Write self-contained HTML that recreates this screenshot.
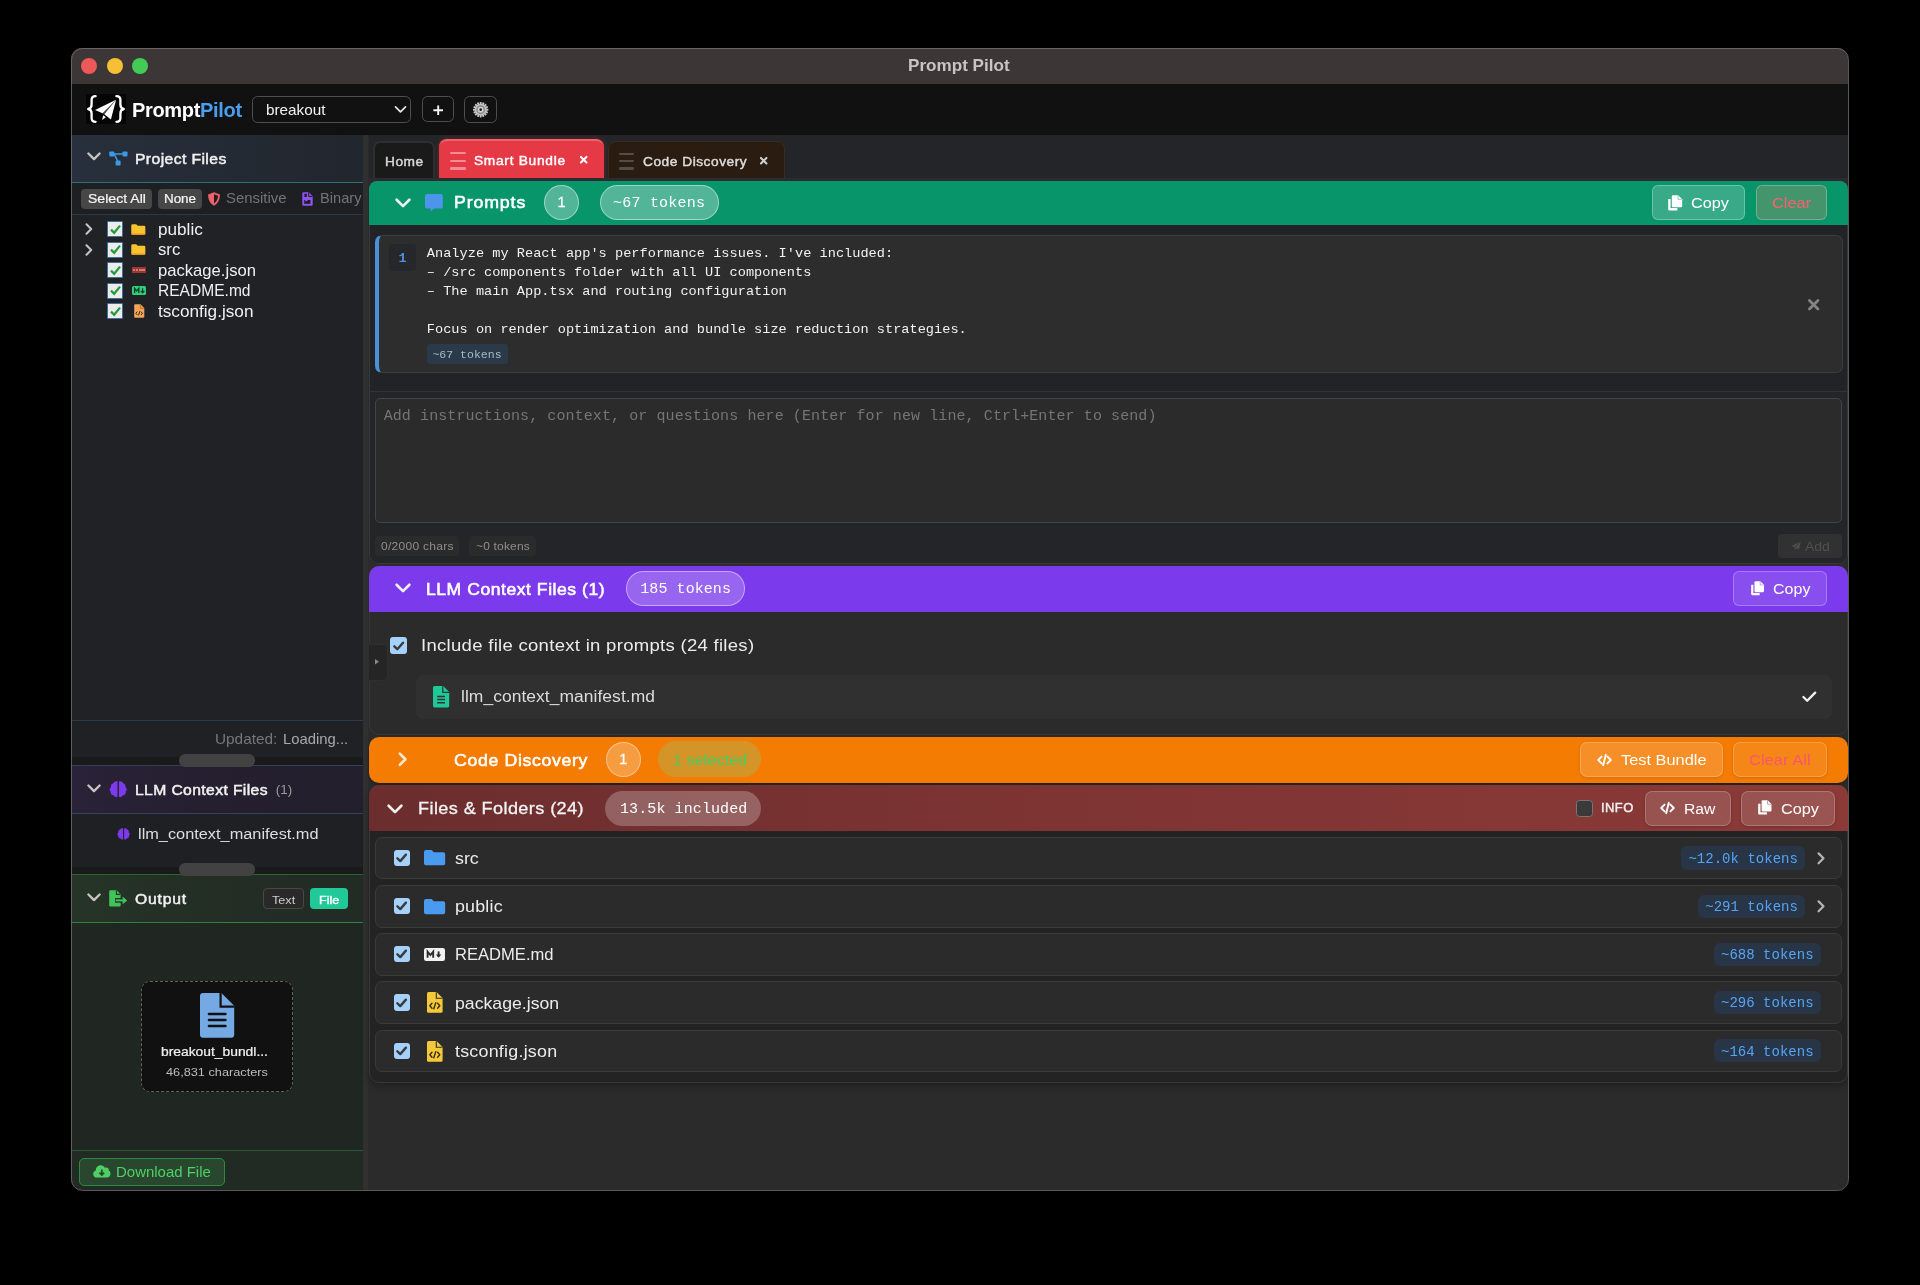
<!DOCTYPE html>
<html lang="en">
<head>
<meta charset="utf-8">
<title>Prompt Pilot</title>
<style>
*{box-sizing:border-box;margin:0;padding:0}
html,body{width:1920px;height:1285px;background:#000;overflow:hidden}
body{font-family:"Liberation Sans",sans-serif;color:#eee;position:relative}
.abs{position:absolute}
.t{position:absolute;white-space:nowrap;line-height:1}
svg{position:absolute;display:block;overflow:visible}
#win{position:absolute;left:71.4px;top:48px;width:1776.8px;height:1142px;border-radius:11px;overflow:hidden;background:#2b2b2b}
#L{position:absolute;left:-71.4px;top:-48px;width:1920px;height:1285px;will-change:transform}
#winborder{position:absolute;left:70.9px;top:47.5px;width:1777.8px;height:1143px;border-radius:11.5px;border:1px solid rgba(120,116,116,.75);pointer-events:none;z-index:50}
</style>
</head>
<body>
<div id="win"><div id="L">
<div class="abs" style="left:71px;top:48px;width:1778px;height:36px;background:#3c3636;"></div>
<div class="abs" style="left:80.8px;top:57.9px;width:16px;height:16px;background:#ee5858;border-radius:50%;"></div>
<div class="abs" style="left:106.6px;top:57.9px;width:16px;height:16px;background:#f6bf35;border-radius:50%;"></div>
<div class="abs" style="left:131.8px;top:57.9px;width:16px;height:16px;background:#44cb56;border-radius:50%;"></div>
<div class="t" style="left:908.00px;top:57.13px;font-size:16.5px;color:#c9c4c4;font-weight:bold;transform:scaleX(1.0359);transform-origin:0 0;">Prompt Pilot</div>
<div class="abs" style="left:71px;top:84px;width:1778px;height:51px;background:#111111;"></div>
<div class="abs" style="left:86px;top:94px;width:40px;height:30px;background:#050505;"></div>
<svg style="left:86px;top:94px" width="40" height="30" viewBox="0 0 40 30" fill="none" stroke="#fff" stroke-width="2.3" stroke-linecap="round" stroke-linejoin="round">
<path d="M9.6 2.2 C6.4 2.2 5.6 3.4 5.6 6 V10.6 C5.6 13.2 4.6 14.6 2.2 15 C4.6 15.4 5.6 16.8 5.6 19.4 V24 C5.6 26.6 6.4 27.8 9.6 27.8"/>
<path d="M30.4 2.2 C33.6 2.2 34.4 3.4 34.4 6 V10.6 C34.4 13.2 35.4 14.6 37.8 15 C35.4 15.4 34.4 16.8 34.4 19.4 V24 C34.4 26.6 33.6 27.8 30.4 27.8"/>
<path d="M30.1 5.7 L9 16 L16.6 19.2 Z" fill="#fff" stroke="none"/>
<path d="M30.1 5.7 L18.3 20.3 L24.9 25.4 Z" fill="#fff" stroke="none"/>
<path d="M17.3 21.2 L16 26 L19.9 23.2 Z" fill="#fff" stroke="none"/>
<path d="M30.1 5.7 L16.6 19.2 L18.3 20.3 Z" fill="#fff" stroke="none" opacity=".25"/>
</svg>
<div class="t" style="left:132px;top:99.97px;font-size:20px;font-weight:bold;letter-spacing:-0.33px;color:#fff">Prompt<span style="color:#4a9eed">Pilot</span></div>
<div class="abs" style="left:252px;top:96.2px;width:159.2px;height:26.8px;background:#111;border:1px solid #4e4e4e;border-radius:5.5px;"></div>
<div class="t" style="left:265.50px;top:102.10px;font-size:15px;color:#f2f2f2;transform:scaleX(1.0193);transform-origin:0 0;">breakout</div>
<svg style="left:394px;top:105px" width="13" height="9" viewBox="0 0 13 9" fill="none" stroke="#e6e6e6" stroke-width="1.7" stroke-linecap="round" stroke-linejoin="round"><path d="M1.5 1.8 L6.5 6.8 L11.5 1.8"/></svg>
<div class="abs" style="left:421.8px;top:96.2px;width:32px;height:25.8px;background:#111;border:1px solid #4e4e4e;border-radius:5.5px;"></div>
<svg style="left:432.6px;top:104.5px" width="10.4" height="10.4" viewBox="0 0 10.4 10.4" stroke="#f4f4f4" stroke-width="1.9" fill="none"><path d="M5.2 0.4 V10 M0.4 5.2 H10"/></svg>
<div class="abs" style="left:464px;top:96px;width:33px;height:27px;background:#111;border:1px solid #4e4e4e;border-radius:5.5px;"></div>
<svg style="left:473px;top:101.6px" width="15.4" height="15.4" viewBox="-7.7 -7.7 15.4 15.4" ><g fill="#c4c4c4"><rect x="-0.95" y="-7.7" width="1.9" height="2.6" rx=".3" transform="rotate(0.0)"/><rect x="-0.95" y="-7.7" width="1.9" height="2.6" rx=".3" transform="rotate(22.5)"/><rect x="-0.95" y="-7.7" width="1.9" height="2.6" rx=".3" transform="rotate(45.0)"/><rect x="-0.95" y="-7.7" width="1.9" height="2.6" rx=".3" transform="rotate(67.5)"/><rect x="-0.95" y="-7.7" width="1.9" height="2.6" rx=".3" transform="rotate(90.0)"/><rect x="-0.95" y="-7.7" width="1.9" height="2.6" rx=".3" transform="rotate(112.5)"/><rect x="-0.95" y="-7.7" width="1.9" height="2.6" rx=".3" transform="rotate(135.0)"/><rect x="-0.95" y="-7.7" width="1.9" height="2.6" rx=".3" transform="rotate(157.5)"/><rect x="-0.95" y="-7.7" width="1.9" height="2.6" rx=".3" transform="rotate(180.0)"/><rect x="-0.95" y="-7.7" width="1.9" height="2.6" rx=".3" transform="rotate(202.5)"/><rect x="-0.95" y="-7.7" width="1.9" height="2.6" rx=".3" transform="rotate(225.0)"/><rect x="-0.95" y="-7.7" width="1.9" height="2.6" rx=".3" transform="rotate(247.5)"/><rect x="-0.95" y="-7.7" width="1.9" height="2.6" rx=".3" transform="rotate(270.0)"/><rect x="-0.95" y="-7.7" width="1.9" height="2.6" rx=".3" transform="rotate(292.5)"/><rect x="-0.95" y="-7.7" width="1.9" height="2.6" rx=".3" transform="rotate(315.0)"/><rect x="-0.95" y="-7.7" width="1.9" height="2.6" rx=".3" transform="rotate(337.5)"/><circle r="5.9"/></g><circle r="3.7" fill="none" stroke="#8a8a8a" stroke-width="1.5"/><circle r="2.5" fill="#d8d8d8"/><circle r="1.35" fill="#1a1a1a"/></svg>
<div class="abs" style="left:71px;top:135px;width:292px;height:1055px;background:#202226;"></div>
<div class="abs" style="left:71px;top:135px;width:292px;height:48px;background:linear-gradient(90deg,#27303c 0%,#242a34 55%,#22262d 100%);border-bottom:1px solid #2b6f78;"></div>
<svg style="left:87px;top:152.3px" width="14" height="9.0" viewBox="0 0 14 9" fill="none" stroke="#c4c4c4" stroke-width="2.35" stroke-linecap="round" stroke-linejoin="round"><path d="M1.4 1.5 L7 7.1 L12.6 1.5"/></svg>
<svg style="left:108.5px;top:150.5px" width="19" height="15" viewBox="0 0 19 15" ><g fill="#3b9ae8"><rect x="0.3" y="0.4" width="5" height="5" rx=".8"/><rect x="13.5" y="0.4" width="5" height="5" rx=".8"/><rect x="6.6" y="9.6" width="5" height="5" rx=".8"/></g><path d="M5 2.9 H13.8 M5.2 3.2 L8.6 10" stroke="#3b9ae8" stroke-width="1.5" fill="none"/></svg>
<div class="t" style="left:135.30px;top:152.41px;font-size:14.4px;color:#f0f0f0;letter-spacing:0.377px;transform:scaleX(1.0900);transform-origin:0 0;-webkit-text-stroke:0.49px #f0f0f0;">Project Files</div>
<div class="abs" style="left:71px;top:183px;width:292px;height:32px;background:#1d1f23;border-bottom:1px solid #2a3948;"></div>
<div class="abs" style="left:81px;top:189px;width:71px;height:19.5px;background:#474747;border-radius:4px;"></div>
<div class="t" style="left:88.00px;top:193.16px;font-size:12.8px;color:#f4f4f4;letter-spacing:0.056px;transform:scaleX(1.0900);transform-origin:0 0;-webkit-text-stroke:0.23px #f4f4f4;">Select All</div>
<div class="abs" style="left:157.5px;top:189px;width:44.5px;height:19.5px;background:#474747;border-radius:4px;"></div>
<div class="t" style="left:163.80px;top:193.16px;font-size:12.8px;color:#f4f4f4;transform:scaleX(1.0457);transform-origin:0 0;-webkit-text-stroke:0.23px #f4f4f4;">None</div>
<svg style="left:207px;top:192px" width="14" height="14" viewBox="0 0 14 14" ><path d="M7 0.3 L12.9 2.5 C12.9 7.6 11 11.4 7 13.7 C3 11.4 1.1 7.6 1.1 2.5 Z" fill="#f0616b"/><path d="M7 2.3 V11.5 C9.6 9.8 10.9 7.2 11 3.8 Z" fill="#1d1f23"/></svg>
<div class="t" style="left:225.50px;top:190.88px;font-size:14.2px;color:#747474;transform:scaleX(1.0500);transform-origin:0 0;">Sensitive</div>
<svg style="left:302px;top:191.5px" width="11" height="14" viewBox="0 0 11 14" ><path d="M1.4 0.3 H6.8 L10.7 4.2 V12.5 Q10.7 13.7 9.5 13.7 H1.4 Q0.3 13.7 0.3 12.5 V1.5 Q0.3 0.3 1.4 0.3 Z" fill="#9152f0"/><path d="M6.6 0.6 V4.4 H10.4" fill="none" stroke="#1d1f23" stroke-width="1"/><rect x="2.4" y="1.8" width="2.4" height="3.2" fill="#1d1f23"/><rect x="2.2" y="8" width="6.2" height="3.8" fill="#1d1f23"/><rect x="3.2" y="6.2" width="2.2" height="3" fill="#9152f0"/></svg>
<div class="t" style="left:320.00px;top:190.88px;font-size:14.2px;color:#747474;transform:scaleX(1.0310);transform-origin:0 0;">Binary</div>
<svg style="left:85px;top:223px" width="8.0" height="12" viewBox="0 0 8 12" fill="none" stroke="#c2c2c2" stroke-width="2.1" stroke-linecap="round" stroke-linejoin="round"><path d="M1.5 1.3 L6.2 6 L1.5 10.7"/></svg>
<svg style="left:85px;top:243.5px" width="8.0" height="12" viewBox="0 0 8 12" fill="none" stroke="#c2c2c2" stroke-width="2.1" stroke-linecap="round" stroke-linejoin="round"><path d="M1.5 1.3 L6.2 6 L1.5 10.7"/></svg>
<div class="abs" style="left:107px;top:221px;width:16px;height:16px;background:#ececec;border:1.5px solid #3f6f9f;border-radius:1px;"></div>
<svg style="left:109.5px;top:223.5px" width="11" height="11" viewBox="0 0 11 11" fill="none" stroke="#1f9d3a" stroke-width="2.2"><path d="M1 5.6 L4.2 8.8 L10 1.6"/></svg>
<div class="t" style="left:157.50px;top:220.99px;font-size:16.2px;color:#f0f0f0;transform:scaleX(1.0584);transform-origin:0 0;">public</div>
<div class="abs" style="left:107px;top:241.5px;width:16px;height:16px;background:#ececec;border:1.5px solid #3f6f9f;border-radius:1px;"></div>
<svg style="left:109.5px;top:244.0px" width="11" height="11" viewBox="0 0 11 11" fill="none" stroke="#1f9d3a" stroke-width="2.2"><path d="M1 5.6 L4.2 8.8 L10 1.6"/></svg>
<div class="t" style="left:157.50px;top:241.49px;font-size:16.2px;color:#f0f0f0;transform:scaleX(1.0326);transform-origin:0 0;">src</div>
<div class="abs" style="left:107px;top:262px;width:16px;height:16px;background:#ececec;border:1.5px solid #3f6f9f;border-radius:1px;"></div>
<svg style="left:109.5px;top:264.5px" width="11" height="11" viewBox="0 0 11 11" fill="none" stroke="#1f9d3a" stroke-width="2.2"><path d="M1 5.6 L4.2 8.8 L10 1.6"/></svg>
<div class="t" style="left:157.50px;top:261.99px;font-size:16.2px;color:#f0f0f0;transform:scaleX(1.0265);transform-origin:0 0;">package.json</div>
<div class="abs" style="left:107px;top:282.5px;width:16px;height:16px;background:#ececec;border:1.5px solid #3f6f9f;border-radius:1px;"></div>
<svg style="left:109.5px;top:285.0px" width="11" height="11" viewBox="0 0 11 11" fill="none" stroke="#1f9d3a" stroke-width="2.2"><path d="M1 5.6 L4.2 8.8 L10 1.6"/></svg>
<div class="t" style="left:157.50px;top:282.49px;font-size:16.2px;color:#f0f0f0;transform:scaleX(0.9614);transform-origin:0 0;">README.md</div>
<div class="abs" style="left:107px;top:303px;width:16px;height:16px;background:#ececec;border:1.5px solid #3f6f9f;border-radius:1px;"></div>
<svg style="left:109.5px;top:305.5px" width="11" height="11" viewBox="0 0 11 11" fill="none" stroke="#1f9d3a" stroke-width="2.2"><path d="M1 5.6 L4.2 8.8 L10 1.6"/></svg>
<div class="t" style="left:157.50px;top:302.99px;font-size:16.2px;color:#f0f0f0;transform:scaleX(1.0605);transform-origin:0 0;">tsconfig.json</div>
<svg style="left:130.9px;top:223.7px" width="14.72" height="11.040000000000001" viewBox="0 0 16 12" ><path d="M1.6 0.4 H5.6 L7.4 2 H14.2 Q15.6 2 15.6 3.4 V10.4 Q15.6 11.8 14.2 11.8 H1.6 Q0.3 11.8 0.3 10.4 V1.8 Q0.3 0.4 1.6 0.4 Z" fill="#f7c32e"/><path d="M0.3 10 H15.6 V10.4 Q15.6 11.8 14.2 11.8 H1.6 Q0.3 11.8 0.3 10.4 Z" fill="#f09a1a" opacity=".75"/></svg>
<svg style="left:130.9px;top:244.2px" width="14.72" height="11.040000000000001" viewBox="0 0 16 12" ><path d="M1.6 0.4 H5.6 L7.4 2 H14.2 Q15.6 2 15.6 3.4 V10.4 Q15.6 11.8 14.2 11.8 H1.6 Q0.3 11.8 0.3 10.4 V1.8 Q0.3 0.4 1.6 0.4 Z" fill="#f7c32e"/><path d="M0.3 10 H15.6 V10.4 Q15.6 11.8 14.2 11.8 H1.6 Q0.3 11.8 0.3 10.4 Z" fill="#f09a1a" opacity=".75"/></svg>
<div class="abs" style="left:131.7px;top:267.4px;width:14.5px;height:5.6px;background:#9e3533;"></div>
<div class="abs" style="left:133.2px;top:268.8px;width:11.4px;height:2px;background:linear-gradient(90deg,#d98c88 0 2px,transparent 2px 3px,#d98c88 3px 5.2px,transparent 5.2px 6.2px,#d98c88 6.2px 11.4px);opacity:.8;"></div>
<div class="abs" style="left:131.7px;top:286px;width:14.3px;height:9.2px;background:#2fcf7a;border-radius:1.5px;"></div>
<svg style="left:131.7px;top:286px" width="14.3" height="9.2" viewBox="0 0 14.3 9.2" fill="none" stroke="#143d27" stroke-width="1.3"><path d="M2.6 7 V2.4 L4.7 5 L6.8 2.4 V7"/><path d="M10.6 2.2 V6.6 M8.8 4.8 L10.6 6.8 L12.4 4.8" stroke-width="1.2"/></svg>
<svg style="left:133.7px;top:303.5px" width="10.5" height="14" viewBox="0 0 10.5 14" ><path d="M1.2 0.2 H6.4 L10.3 4.1 V12.6 Q10.3 13.8 9.1 13.8 H1.2 Q0.2 13.8 0.2 12.6 V1.4 Q0.2 0.2 1.2 0.2 Z" fill="#f3a45b"/><path d="M6.3 0.5 V4.2 H10" fill="none" stroke="#b36a2a" stroke-width=".9"/><path d="M3.3 7.6 L1.9 9.3 L3.3 11 M7 7.6 L8.4 9.3 L7 11 M5.8 7.2 L4.6 11.4" fill="none" stroke="#3a2410" stroke-width="1"/></svg>
<div class="abs" style="left:71px;top:720px;width:292px;height:37px;background:#1f2125;border-top:1px solid #2d3b4e;"></div>
<div class="t" style="left:215.00px;top:731.68px;font-size:14.2px;color:#777;transform:scaleX(1.0810);transform-origin:0 0;">Updated:</div>
<div class="t" style="left:283.00px;top:731.68px;font-size:14.2px;color:#a8a8a8;transform:scaleX(1.0469);transform-origin:0 0;">Loading...</div>
<div class="abs" style="left:71px;top:757px;width:292px;height:7.5px;background:#1a1a1b;"></div>
<div class="abs" style="left:71px;top:764.5px;width:292px;height:49px;background:linear-gradient(90deg,#2a2238 0%,#251f30 45%,#231f2c 100%);border-top:1px solid #34405a;border-bottom:1px solid #35435f;"></div>
<div class="abs" style="left:179px;top:754.3px;width:76px;height:12.6px;background:#424242;border-radius:6.3px;"></div>
<svg style="left:87px;top:783.5px" width="14" height="9.0" viewBox="0 0 14 9" fill="none" stroke="#c4c4c4" stroke-width="2.35" stroke-linecap="round" stroke-linejoin="round"><path d="M1.4 1.5 L7 7.1 L12.6 1.5"/></svg>
<svg style="left:109px;top:780.8px" width="18.4" height="16.56" viewBox="0 0 20 18" ><path d="M9.2 0.6 C7.4 -0.2 5.4 0.6 4.8 2.4 C2.8 2.6 1.6 4.6 2.2 6.4 C0.4 7.6 0.2 10.4 1.8 11.8 C1.4 14 3 15.8 5 15.6 C5.8 17.4 8 18 9.2 17.2 Z" fill="#7c3aed"/><path d="M10.8 0.6 C12.6 -0.2 14.6 0.6 15.2 2.4 C17.2 2.6 18.4 4.6 17.8 6.4 C19.6 7.6 19.8 10.4 18.2 11.8 C18.6 14 17 15.8 15 15.6 C14.2 17.4 12 18 10.8 17.2 Z" fill="#7c3aed"/></svg>
<div class="t" style="left:135.30px;top:782.81px;font-size:14.4px;color:#f0f0f0;letter-spacing:0.351px;transform:scaleX(1.0900);transform-origin:0 0;-webkit-text-stroke:0.49px #f0f0f0;">LLM Context Files</div>
<div class="t" style="left:275.80px;top:782.66px;font-size:13.4px;color:#9a9a9a;">(1)</div>
<div class="abs" style="left:71px;top:814px;width:292px;height:53px;background:#1f2024;"></div>
<svg style="left:117px;top:827.5px" width="13.2" height="11.88" viewBox="0 0 20 18" ><path d="M9.2 0.6 C7.4 -0.2 5.4 0.6 4.8 2.4 C2.8 2.6 1.6 4.6 2.2 6.4 C0.4 7.6 0.2 10.4 1.8 11.8 C1.4 14 3 15.8 5 15.6 C5.8 17.4 8 18 9.2 17.2 Z" fill="#7c3aed"/><path d="M10.8 0.6 C12.6 -0.2 14.6 0.6 15.2 2.4 C17.2 2.6 18.4 4.6 17.8 6.4 C19.6 7.6 19.8 10.4 18.2 11.8 C18.6 14 17 15.8 15 15.6 C14.2 17.4 12 18 10.8 17.2 Z" fill="#7c3aed"/></svg>
<div class="t" style="left:138.30px;top:825.83px;font-size:15.2px;color:#dedede;transform:scaleX(1.0748);transform-origin:0 0;">llm_context_manifest.md</div>
<div class="abs" style="left:71px;top:866.5px;width:292px;height:7.5px;background:#1a1a1b;"></div>
<div class="abs" style="left:71px;top:874px;width:292px;height:49px;background:linear-gradient(90deg,#263427 0%,#232e25 45%,#222b24 100%);border-top:1px solid #296531;border-bottom:1px solid #2d823d;"></div>
<div class="abs" style="left:179px;top:863.2px;width:76px;height:12.6px;background:#424242;border-radius:6.3px;"></div>
<svg style="left:87px;top:893px" width="14" height="9.0" viewBox="0 0 14 9" fill="none" stroke="#c4c4c4" stroke-width="2.35" stroke-linecap="round" stroke-linejoin="round"><path d="M1.4 1.5 L7 7.1 L12.6 1.5"/></svg>
<svg style="left:108.8px;top:890px" width="19" height="17" viewBox="0 0 19 17" ><path d="M1.6 0.2 H7.6 L11.6 4.2 V15.2 Q11.6 16.6 10.2 16.6 H1.6 Q0.2 16.6 0.2 15.2 V1.6 Q0.2 0.2 1.6 0.2 Z" fill="#3fc35a"/><path d="M7.4 0.4 V4.4 H11.4" fill="none" stroke="#232e25" stroke-width="1.1"/><path d="M6 10.4 H13.4" stroke="#232e25" stroke-width="4.6"/><path d="M6.6 10.4 H14 " stroke="#3fc35a" stroke-width="2"/><path d="M13.6 6.6 L18.2 10.4 L13.6 14.2 Z" fill="#3fc35a"/></svg>
<div class="t" style="left:135.30px;top:891.51px;font-size:14.4px;color:#f0f0f0;letter-spacing:0.746px;transform:scaleX(1.0900);transform-origin:0 0;-webkit-text-stroke:0.49px #f0f0f0;">Output</div>
<div class="abs" style="left:262.5px;top:888px;width:41px;height:21px;background:#29292a;border:1px solid #474747;border-radius:4px;"></div>
<div class="t" style="left:271.80px;top:893.68px;font-size:11.6px;color:#cfcfcf;transform:scaleX(1.0900);transform-origin:0 0;">Text</div>
<div class="abs" style="left:309.5px;top:888px;width:38.5px;height:21px;background:#20c997;border-radius:4px;"></div>
<div class="t" style="left:318.80px;top:893.60px;font-size:11.7px;color:#fff;transform:scaleX(1.0714);transform-origin:0 0;-webkit-text-stroke:0.40px #fff;">File</div>
<div class="abs" style="left:71px;top:923px;width:292px;height:228px;background:#202622;"></div>
<div class="abs" style="left:140.9px;top:981.3px;width:152.3px;height:111px;background:#111;border:1.4px dashed #626262;border-radius:9px;"></div>
<svg style="left:200px;top:992.8px" width="34.2" height="44.8" viewBox="0 0 34.2 44.8" ><path d="M3 0 H21.4 L34.2 12.8 V41.8 Q34.2 44.8 31.2 44.8 H3 Q0 44.8 0 41.8 V3 Q0 0 3 0 Z" fill="#74a9e4"/><path d="M20.6 0 V13.6 H34.2" fill="none" stroke="#111" stroke-width="2.2"/><path d="M9 21 H25.4 M9 27 H25.4 M9 33 H25.4" stroke="#111" stroke-width="2.6" stroke-linecap="round"/></svg>
<div class="t" style="left:161.30px;top:1045.78px;font-size:12.9px;color:#f0f0f0;transform:scaleX(1.0733);transform-origin:0 0;-webkit-text-stroke:0.23px #f0f0f0;">breakout_bundl...</div>
<div class="t" style="left:166.30px;top:1065.90px;font-size:11.7px;color:#bdbdbd;transform:scaleX(1.0891);transform-origin:0 0;">46,831 characters</div>
<div class="abs" style="left:71px;top:1150px;width:292px;height:40.5px;background:#222a24;border-top:1.3px solid #2a5a32;"></div>
<div class="abs" style="left:79px;top:1157.5px;width:146px;height:28px;background:#29472f;border:1px solid #2c8a3e;border-radius:5px;"></div>
<svg style="left:92.5px;top:1164.8px" width="17.6" height="12.8" viewBox="0 0 17.6 12.8" ><path d="M4.2 12.6 C1.8 12.6 0.2 11 0.2 8.9 C0.2 7.2 1.3 5.8 2.8 5.4 C2.7 2.5 4.8 0.2 7.6 0.2 C9.6 0.2 11.2 1.3 12 2.9 C12.5 2.6 13 2.5 13.5 2.5 C15.1 2.5 16.2 3.9 15.8 5.5 C16.9 6.1 17.5 7.4 17.5 8.7 C17.5 10.9 15.9 12.6 13.8 12.6 Z" fill="#4fcf66"/><path d="M8.8 4.4 V9.6 M6.4 7.6 L8.8 10 L11.2 7.6" fill="none" stroke="#29472f" stroke-width="1.7"/></svg>
<div class="t" style="left:116.20px;top:1164.73px;font-size:14.5px;color:#4fcf66;transform:scaleX(1.0318);transform-origin:0 0;">Download File</div>
<div class="abs" style="left:363.4px;top:135px;width:4.8px;height:1055px;background:#303030;"></div>
<div class="abs" style="left:369px;top:135px;width:1479px;height:46px;background:#242528;"></div>
<div class="abs" style="left:369px;top:181px;width:1479px;height:1009px;background:#2b2b2b;"></div>
<div class="abs" style="left:373.3px;top:141px;width:61.3px;height:40px;background:#1a1a1a;border:2px solid #2f2f30;border-radius:7px 7px 0 0;"></div>
<div class="t" style="left:385.00px;top:155.53px;font-size:12.6px;color:#d8d8d8;letter-spacing:0.450px;transform:scaleX(1.0900);transform-origin:0 0;-webkit-text-stroke:0.43px #d8d8d8;">Home</div>
<div class="abs" style="left:438.5px;top:139.2px;width:165.5px;height:41px;background:#e63946;border-radius:8px 8px 0 0;border-top:2.5px solid #f1626d;box-shadow:0 0 5px rgba(230,57,70,.35);"></div>
<div class="abs" style="left:450px;top:151.8px;width:15.5px;height:2.5px;background:#f58b93;border-radius:1.3px;"></div>
<div class="abs" style="left:450px;top:159.5px;width:15.5px;height:2.5px;background:#f58b93;border-radius:1.3px;"></div>
<div class="abs" style="left:450px;top:167.2px;width:15.5px;height:2.5px;background:#f58b93;border-radius:1.3px;"></div>
<div class="t" style="left:473.80px;top:155.03px;font-size:12.6px;color:#fff;letter-spacing:0.657px;transform:scaleX(1.0900);transform-origin:0 0;-webkit-text-stroke:0.43px #fff;">Smart Bundle</div>
<svg style="left:579.6px;top:156.4px" width="7.4" height="7.4" viewBox="0 0 8 8" stroke="#fff" stroke-width="2.2" stroke-linecap="round" fill="none"><path d="M1 1 L7 7 M7 1 L1 7"/></svg>
<div class="abs" style="left:608.3px;top:141px;width:176.7px;height:40px;background:#2a1c10;border:1.5px solid #3a2c20;border-radius:8px 8px 0 0;"></div>
<div class="abs" style="left:619.3px;top:152.6px;width:15px;height:2.4px;background:#524e49;border-radius:1.2px;"></div>
<div class="abs" style="left:619.3px;top:160px;width:15px;height:2.4px;background:#524e49;border-radius:1.2px;"></div>
<div class="abs" style="left:619.3px;top:167.4px;width:15px;height:2.4px;background:#524e49;border-radius:1.2px;"></div>
<div class="t" style="left:642.60px;top:155.53px;font-size:12.6px;color:#dcdcdc;letter-spacing:0.476px;transform:scaleX(1.0900);transform-origin:0 0;-webkit-text-stroke:0.43px #dcdcdc;">Code Discovery</div>
<svg style="left:760.3px;top:156.6px" width="7.4" height="7.4" viewBox="0 0 8 8" stroke="#d0d0d0" stroke-width="2.2" stroke-linecap="round" fill="none"><path d="M1 1 L7 7 M7 1 L1 7"/></svg>
<div class="abs" style="left:369px;top:177.7px;width:1479px;height:3.7px;background:#2c2c2e;"></div>
<div class="abs" style="left:369.4px;top:181.3px;width:1478.6px;height:382.7px;background:#222327;border:1px solid #38383a;border-radius:8px 8px 10px 10px;"></div>
<div class="abs" style="left:369.4px;top:181.3px;width:1478.6px;height:43.6px;background:#08956a;border-radius:8px 8px 0 0;"></div>
<svg style="left:394.6px;top:197.6px" width="16" height="10.285714285714286" viewBox="0 0 14 9" fill="none" stroke="#f0f0f0" stroke-width="2.3" stroke-linecap="round" stroke-linejoin="round"><path d="M1.4 1.5 L7 7.1 L12.6 1.5"/></svg>
<svg style="left:425.4px;top:193.6px" width="17.8" height="17.8" viewBox="0 0 17.8 17.8" ><path d="M2 0 H15.8 Q17.8 0 17.8 2 V12.4 Q17.8 14.4 15.8 14.4 H9.4 L5.6 17.6 V14.4 H2 Q0 14.4 0 12.4 V2 Q0 0 2 0 Z" fill="#4d94ec"/></svg>
<div class="t" style="left:454.00px;top:194.20px;font-size:16.3px;color:#fff;letter-spacing:0.793px;transform:scaleX(1.0900);transform-origin:0 0;-webkit-text-stroke:0.55px #fff;">Prompts</div>
<div class="abs" style="left:543.8px;top:185px;width:35.2px;height:35.2px;background:rgba(255,255,255,.3);border:1px solid rgba(255,255,255,.45);border-radius:50%;"></div>
<div class="t" style="left:557.40px;top:195.24px;font-size:14.6px;color:#fff;-webkit-text-stroke:0.26px #fff;">1</div>
<div class="abs" style="left:599.6px;top:185px;width:119.8px;height:34.8px;background:rgba(255,255,255,.3);border:1px solid rgba(255,255,255,.45);border-radius:17.5px;"></div>
<div class="t" style="left:613.00px;top:195.90px;font-size:15px;color:#fff;letter-spacing:0.219px;font-family:'Liberation Mono',monospace;">~67 tokens</div>
<div class="abs" style="left:1651.6px;top:185.2px;width:93.6px;height:34.8px;background:rgba(255,255,255,.2);border:1px solid rgba(255,255,255,.28);border-radius:6px;"></div>
<svg style="left:1668.3px;top:194.7px" width="14.4" height="15.6" viewBox="0 0 14.4 15.6" ><path d="M0.2 4 H2.6 V13 H9.4 V15.4 H1.4 Q0.2 15.4 0.2 14.2 Z" fill="#fff"/><path d="M5 0.2 H10.2 L14.2 4.2 V11 Q14.2 12.2 13 12.2 H5 Q3.8 12.2 3.8 11 V1.4 Q3.8 0.2 5 0.2 Z" fill="#fff"/><path d="M10 0.4 V4.4 H14" fill="none" stroke="#3aa582" stroke-width="1" opacity=".55"/></svg>
<div class="t" style="left:1691.40px;top:195.22px;font-size:15.1px;color:#fff;transform:scaleX(1.0751);transform-origin:0 0;">Copy</div>
<div class="abs" style="left:1755.8px;top:185.2px;width:71.2px;height:34.8px;background:rgba(120,150,110,.55);border:1px solid rgba(255,255,255,.25);border-radius:6px;"></div>
<div class="t" style="left:1772.30px;top:195.22px;font-size:15.1px;color:#ff5f6e;transform:scaleX(1.0863);transform-origin:0 0;">Clear</div>
<div class="abs" style="left:374.5px;top:235px;width:1468.2px;height:137.6px;background:#2d2d2d;border:1px solid #3d3d3d;border-radius:7px;border-left:4px solid #4a90d9;"></div>
<div class="abs" style="left:388.8px;top:244.2px;width:27.6px;height:27.2px;background:#26272b;border-radius:4px;"></div>
<div class="t" style="left:398.50px;top:251.77px;font-size:13.6px;color:#4f8fdc;font-weight:bold;font-family:'Liberation Mono',monospace;">1</div>
<div class="t" style="left:426.80px;top:247.37px;font-size:13.6px;color:#f2f2f2;letter-spacing:0.024px;font-family:'Liberation Mono',monospace;">Analyze my React app's performance issues. I've included:</div>
<div class="t" style="left:426.80px;top:266.37px;font-size:13.6px;color:#f2f2f2;letter-spacing:0.024px;font-family:'Liberation Mono',monospace;">– /src components folder with all UI components</div>
<div class="t" style="left:426.80px;top:285.37px;font-size:13.6px;color:#f2f2f2;letter-spacing:0.024px;font-family:'Liberation Mono',monospace;">– The main App.tsx and routing configuration</div>
<div class="t" style="left:426.80px;top:323.37px;font-size:13.6px;color:#f2f2f2;letter-spacing:0.024px;font-family:'Liberation Mono',monospace;">Focus on render optimization and bundle size reduction strategies.</div>
<div class="abs" style="left:426.6px;top:344.3px;width:81px;height:19.5px;background:#2b3a48;border-radius:3px;"></div>
<div class="t" style="left:432.40px;top:348.78px;font-size:11.5px;color:#a9b8c6;letter-spacing:0.019px;font-family:'Liberation Mono',monospace;">~67 tokens</div>
<svg style="left:1807.6px;top:298.6px" width="11.4" height="11.4" viewBox="0 0 12 12" stroke="#858585" stroke-width="2.9" stroke-linecap="round" fill="none"><path d="M1.5 1.5 L10.5 10.5 M10.5 1.5 L1.5 10.5"/></svg>
<div class="abs" style="left:370.4px;top:390.6px;width:1476.6px;height:172.4px;background:#242528;border-radius:0 0 9px 9px;border-top:1px solid #343436;"></div>
<div class="abs" style="left:375px;top:397.5px;width:1467px;height:125.5px;background:#2b2b2b;border:1px solid #444;border-radius:5px;"></div>
<div class="t" style="left:383.70px;top:409.10px;font-size:15px;color:#757575;letter-spacing:0.091px;font-family:'Liberation Mono',monospace;">Add instructions, context, or questions here (Enter for new line, Ctrl+Enter to send)</div>
<div class="abs" style="left:375px;top:536.3px;width:83.8px;height:19.4px;background:#2b2b2c;border-radius:4px;"></div>
<div class="t" style="left:380.80px;top:541.29px;font-size:11px;color:#8f8f8f;letter-spacing:0.266px;transform:scaleX(1.0900);transform-origin:0 0;">0/2000 chars</div>
<div class="abs" style="left:469.3px;top:536.3px;width:66.4px;height:19.4px;background:#2b2b2c;border-radius:4px;"></div>
<div class="t" style="left:475.60px;top:541.29px;font-size:11px;color:#8f8f8f;letter-spacing:0.170px;transform:scaleX(1.0900);transform-origin:0 0;">~0 tokens</div>
<div class="abs" style="left:1778.2px;top:534px;width:63.8px;height:24.4px;background:#313132;border-radius:4px;"></div>
<svg style="left:1791px;top:541.4px" width="10" height="10" viewBox="0 0 10 10" ><path d="M9.8 0.2 L0.4 5 L3.6 6.2 L3.8 9.6 L5.4 7.2 L8 8.6 Z" fill="#4d4d4d"/><path d="M9.6 0.4 L3.8 6.3" stroke="#313132" stroke-width=".8"/></svg>
<div class="t" style="left:1805.40px;top:539.86px;font-size:13.4px;color:#505050;transform:scaleX(1.0443);transform-origin:0 0;">Add</div>
<div class="abs" style="left:369.4px;top:566.2px;width:1478.6px;height:169px;background:#2b2b2b;border:1px solid #38383a;border-radius:10px;"></div>
<div class="abs" style="left:369.4px;top:566.2px;width:1478.6px;height:45.8px;background:#7c3aed;border-radius:10px 10px 0 0;"></div>
<svg style="left:394.6px;top:583.4px" width="16" height="10.285714285714286" viewBox="0 0 14 9" fill="none" stroke="#f0f0f0" stroke-width="2.3" stroke-linecap="round" stroke-linejoin="round"><path d="M1.4 1.5 L7 7.1 L12.6 1.5"/></svg>
<div class="t" style="left:425.80px;top:580.77px;font-size:16.1px;color:#fff;letter-spacing:0.500px;transform:scaleX(1.0900);transform-origin:0 0;-webkit-text-stroke:0.55px #fff;">LLM Context Files (1)</div>
<div class="abs" style="left:625.8px;top:571.2px;width:119.4px;height:34.6px;background:rgba(255,255,255,.22);border:1px solid rgba(255,255,255,.45);border-radius:17.3px;"></div>
<div class="t" style="left:640.30px;top:581.90px;font-size:15px;color:#fff;letter-spacing:0.069px;font-family:'Liberation Mono',monospace;">185 tokens</div>
<div class="abs" style="left:1733.4px;top:571.2px;width:93.4px;height:34.8px;background:rgba(255,255,255,.1);border:1px solid rgba(255,255,255,.26);border-radius:6px;"></div>
<svg style="left:1750.6px;top:580.6px" width="13.248000000000001" height="14.352" viewBox="0 0 14.4 15.6" ><path d="M0.2 4 H2.6 V13 H9.4 V15.4 H1.4 Q0.2 15.4 0.2 14.2 Z" fill="#fff"/><path d="M5 0.2 H10.2 L14.2 4.2 V11 Q14.2 12.2 13 12.2 H5 Q3.8 12.2 3.8 11 V1.4 Q3.8 0.2 5 0.2 Z" fill="#fff"/><path d="M10 0.4 V4.4 H14" fill="none" stroke="#874df0" stroke-width="1" opacity=".55"/></svg>
<div class="t" style="left:1773.20px;top:581.22px;font-size:15.1px;color:#fff;transform:scaleX(1.0610);transform-origin:0 0;">Copy</div>
<div class="abs" style="left:368px;top:643.6px;width:19.6px;height:37.6px;background:#252526;border:1px solid #2f2f30;border-radius:0 5px 5px 0;"></div>
<svg style="left:375.2px;top:659.4px" width="4" height="5.6" viewBox="0 0 4 5.6" ><path d="M0 0 L4 2.8 L0 5.6 Z" fill="#8a8a8a"/></svg>
<div class="abs" style="left:390px;top:637.2px;width:16.6px;height:16.6px;background:#a5d1fb;border-radius:3px;"></div><svg style="left:392.822px;top:640.5200000000001px" width="11.288000000000002" height="10.292000000000002" viewBox="0 0 11 10" fill="none" stroke="#383a3e" stroke-width="2.3" stroke-linecap="round" stroke-linejoin="round"><path d="M1.3 5.2 L4.2 8 L9.8 1.6"/></svg>
<div class="t" style="left:420.60px;top:637.11px;font-size:17px;color:#ececec;letter-spacing:0.263px;transform:scaleX(1.0900);transform-origin:0 0;">Include file context in prompts (24 files)</div>
<div class="abs" style="left:415.5px;top:674.5px;width:1416px;height:44.3px;background:#303030;border-radius:7px;"></div>
<svg style="left:432.5px;top:685.8px" width="16.2" height="21.4" viewBox="0 0 16.2 21.4" ><path d="M1.6 0 H10.2 L16.2 6 V19.8 Q16.2 21.4 14.6 21.4 H1.6 Q0 21.4 0 19.8 V1.6 Q0 0 1.6 0 Z" fill="#1ec997"/><path d="M9.8 0.2 V6.4 H16" fill="none" stroke="#303030" stroke-width="1.2"/><path d="M4.2 10.4 H12 M4.2 13.6 H12 M4.2 16.8 H12" stroke="#303030" stroke-width="1.5"/></svg>
<div class="t" style="left:461.00px;top:688.86px;font-size:16px;color:#dcdcdc;letter-spacing:0.044px;transform:scaleX(1.0900);transform-origin:0 0;">llm_context_manifest.md</div>
<svg style="left:1802.4px;top:690.6px" width="14.6" height="11.6" viewBox="0 0 14.6 11.6" fill="none" stroke="#f0f0f0" stroke-width="2.3" stroke-linecap="round" stroke-linejoin="round"><path d="M1.4 6 L5.2 9.8 L13.2 1.6"/></svg>
<div class="abs" style="left:369.4px;top:737.2px;width:1478.6px;height:45.4px;background:#f57c02;border-radius:10px;box-shadow:0 1px 3px rgba(0,0,0,.35);"></div>
<svg style="left:397.6px;top:752.4px" width="9.6" height="14.4" viewBox="0 0 8 12" fill="none" stroke="#fbe6d2" stroke-width="2.2" stroke-linecap="round" stroke-linejoin="round"><path d="M1.5 1.3 L6.2 6 L1.5 10.7"/></svg>
<div class="t" style="left:453.80px;top:751.50px;font-size:16.3px;color:#fff;letter-spacing:0.576px;transform:scaleX(1.0900);transform-origin:0 0;-webkit-text-stroke:0.55px #fff;">Code Discovery</div>
<div class="abs" style="left:605.8px;top:742px;width:34.8px;height:34.8px;background:rgba(255,255,255,.25);border:1px solid rgba(255,255,255,.4);border-radius:50%;"></div>
<div class="t" style="left:619.20px;top:752.04px;font-size:14.6px;color:#fff;-webkit-text-stroke:0.26px #fff;">1</div>
<div class="abs" style="left:658.3px;top:741.4px;width:102.4px;height:35.6px;background:#d49428;border-radius:17.8px;"></div>
<div class="t" style="left:672.60px;top:752.22px;font-size:15.1px;color:#3cd264;transform:scaleX(1.0808);transform-origin:0 0;">1 selected</div>
<div class="abs" style="left:1580.4px;top:742px;width:142.2px;height:34.8px;background:rgba(255,255,255,.15);border:1px solid rgba(255,255,255,.22);border-radius:7px;box-shadow:0 1px 3px rgba(0,0,0,.15);"></div>
<svg style="left:1597px;top:753.6px" width="15.0" height="12.0" viewBox="0 0 15 12" fill="none" stroke="#fff" stroke-width="1.9" stroke-linecap="round" stroke-linejoin="round"><path d="M4.6 2.6 L1.2 6 L4.6 9.4 M10.4 2.6 L13.8 6 L10.4 9.4 M8.8 0.8 L6.2 11.2"/></svg>
<div class="t" style="left:1621.00px;top:751.72px;font-size:15.1px;color:#fff;transform:scaleX(1.0848);transform-origin:0 0;">Test Bundle</div>
<div class="abs" style="left:1733px;top:742px;width:93.8px;height:34.8px;background:rgba(255,255,255,.09);border:1px solid rgba(255,255,255,.2);border-radius:7px;box-shadow:0 1px 3px rgba(0,0,0,.15);"></div>
<div class="t" style="left:1749.40px;top:751.72px;font-size:15.1px;color:#f9566b;letter-spacing:0.032px;transform:scaleX(1.0900);transform-origin:0 0;">Clear All</div>
<div class="abs" style="left:369.4px;top:785px;width:1478.6px;height:298px;background:#232324;border:1px solid #38383a;border-radius:10px;box-shadow:0 3px 7px rgba(0,0,0,.28);"></div>
<div class="abs" style="left:369.4px;top:785px;width:1478.6px;height:46.2px;background:linear-gradient(90deg,#6b2d2e 0%,#7d3433 45%,#8b3a37 100%);border-radius:10px 10px 0 0;"></div>
<svg style="left:387.4px;top:803.6px" width="16" height="10.285714285714286" viewBox="0 0 14 9" fill="none" stroke="#f0f0f0" stroke-width="2.3" stroke-linecap="round" stroke-linejoin="round"><path d="M1.4 1.5 L7 7.1 L12.6 1.5"/></svg>
<div class="t" style="left:417.60px;top:800.95px;font-size:16.6px;color:#f4f4f4;letter-spacing:0.373px;transform:scaleX(1.0900);transform-origin:0 0;-webkit-text-stroke:0.30px #f4f4f4;">Files &amp; Folders (24)</div>
<div class="abs" style="left:605px;top:790.6px;width:156.2px;height:35.2px;background:rgba(255,255,255,.24);border-radius:17.6px;"></div>
<div class="t" style="left:620.00px;top:801.50px;font-size:15px;color:#fff;letter-spacing:0.099px;font-family:'Liberation Mono',monospace;">13.5k included</div>
<div class="abs" style="left:1575.6px;top:799.8px;width:17px;height:16.8px;background:#3a3a3b;border:1.5px solid #767676;border-radius:3.5px;"></div>
<div class="t" style="left:1600.80px;top:802.93px;font-size:11.9px;color:#f0f0f0;letter-spacing:0.417px;transform:scaleX(1.0900);transform-origin:0 0;-webkit-text-stroke:0.40px #f0f0f0;">INFO</div>
<div class="abs" style="left:1644.5px;top:790.6px;width:86px;height:35px;background:rgba(255,255,255,.135);border:1px solid rgba(255,255,255,.2);border-radius:7px;box-shadow:0 1px 3px rgba(0,0,0,.18);"></div>
<svg style="left:1660.4px;top:802.2px" width="15.0" height="12.0" viewBox="0 0 15 12" fill="none" stroke="#fff" stroke-width="1.9" stroke-linecap="round" stroke-linejoin="round"><path d="M4.6 2.6 L1.2 6 L4.6 9.4 M10.4 2.6 L13.8 6 L10.4 9.4 M8.8 0.8 L6.2 11.2"/></svg>
<div class="t" style="left:1683.60px;top:801.02px;font-size:15.1px;color:#fff;transform:scaleX(1.0395);transform-origin:0 0;">Raw</div>
<div class="abs" style="left:1741.2px;top:790.6px;width:93.6px;height:35px;background:rgba(255,255,255,.135);border:1px solid rgba(255,255,255,.2);border-radius:7px;box-shadow:0 1px 3px rgba(0,0,0,.18);"></div>
<svg style="left:1758px;top:800px" width="13.68" height="14.819999999999999" viewBox="0 0 14.4 15.6" ><path d="M0.2 4 H2.6 V13 H9.4 V15.4 H1.4 Q0.2 15.4 0.2 14.2 Z" fill="#fff"/><path d="M5 0.2 H10.2 L14.2 4.2 V11 Q14.2 12.2 13 12.2 H5 Q3.8 12.2 3.8 11 V1.4 Q3.8 0.2 5 0.2 Z" fill="#fff"/><path d="M10 0.4 V4.4 H14" fill="none" stroke="#9a5250" stroke-width="1" opacity=".55"/></svg>
<div class="t" style="left:1781.00px;top:801.02px;font-size:15.1px;color:#fff;transform:scaleX(1.0780);transform-origin:0 0;">Copy</div>
<div class="abs" style="left:375px;top:836.8px;width:1467px;height:42.6px;background:#2b2b2b;border:1px solid #3a3a3a;border-radius:7px;"></div>
<div class="abs" style="left:393.7px;top:849.7px;width:16.4px;height:16.4px;background:#a5d1fb;border-radius:3px;"></div><svg style="left:396.488px;top:852.98px" width="11.152" height="10.168" viewBox="0 0 11 10" fill="none" stroke="#383a3e" stroke-width="2.3" stroke-linecap="round" stroke-linejoin="round"><path d="M1.3 5.2 L4.2 8 L9.8 1.6"/></svg>
<svg style="left:423.8px;top:850.4px" width="21.2" height="15.2" viewBox="0 0 21.2 15.2" ><path d="M2 0 H7.6 L9.8 2.2 H19.2 Q21.2 2.2 21.2 4.2 V13.2 Q21.2 15.2 19.2 15.2 H2 Q0 15.2 0 13.2 V2 Q0 0 2 0 Z" fill="#4a9bf0"/></svg>
<div class="t" style="left:455.00px;top:849.92px;font-size:16.4px;color:#ececec;transform:scaleX(1.0886);transform-origin:0 0;">src</div>
<div class="abs" style="left:1681.24px;top:846.4px;width:124.05999999999999px;height:23.2px;background:#283547;border-radius:6px;"></div>
<div class="t" style="left:1688.44px;top:851.87px;font-size:14px;color:#55a4f3;letter-spacing:0.019px;font-family:'Liberation Mono',monospace;">~12.0k tokens</div>
<svg style="left:1816.6px;top:851.8px" width="8.4" height="12.6" viewBox="0 0 8 12" fill="none" stroke="#b5b5b5" stroke-width="2.1" stroke-linecap="round" stroke-linejoin="round"><path d="M1.5 1.3 L6.2 6 L1.5 10.7"/></svg>
<div class="abs" style="left:375px;top:885.0px;width:1467px;height:42.6px;background:#2b2b2b;border:1px solid #3a3a3a;border-radius:7px;"></div>
<div class="abs" style="left:393.7px;top:897.9000000000001px;width:16.4px;height:16.4px;background:#a5d1fb;border-radius:3px;"></div><svg style="left:396.488px;top:901.1800000000001px" width="11.152" height="10.168" viewBox="0 0 11 10" fill="none" stroke="#383a3e" stroke-width="2.3" stroke-linecap="round" stroke-linejoin="round"><path d="M1.3 5.2 L4.2 8 L9.8 1.6"/></svg>
<svg style="left:423.8px;top:898.6px" width="21.2" height="15.2" viewBox="0 0 21.2 15.2" ><path d="M2 0 H7.6 L9.8 2.2 H19.2 Q21.2 2.2 21.2 4.2 V13.2 Q21.2 15.2 19.2 15.2 H2 Q0 15.2 0 13.2 V2 Q0 0 2 0 Z" fill="#4a9bf0"/></svg>
<div class="t" style="left:455.00px;top:898.12px;font-size:16.4px;color:#ececec;letter-spacing:0.167px;transform:scaleX(1.0900);transform-origin:0 0;">public</div>
<div class="abs" style="left:1698.08px;top:894.6px;width:107.22px;height:23.2px;background:#283547;border-radius:6px;"></div>
<div class="t" style="left:1705.28px;top:900.07px;font-size:14px;color:#55a4f3;letter-spacing:0.019px;font-family:'Liberation Mono',monospace;">~291 tokens</div>
<svg style="left:1816.6px;top:900.0px" width="8.4" height="12.6" viewBox="0 0 8 12" fill="none" stroke="#b5b5b5" stroke-width="2.1" stroke-linecap="round" stroke-linejoin="round"><path d="M1.5 1.3 L6.2 6 L1.5 10.7"/></svg>
<div class="abs" style="left:375px;top:933.1999999999999px;width:1467px;height:42.6px;background:#2b2b2b;border:1px solid #3a3a3a;border-radius:7px;"></div>
<div class="abs" style="left:393.7px;top:946.1px;width:16.4px;height:16.4px;background:#a5d1fb;border-radius:3px;"></div><svg style="left:396.488px;top:949.38px" width="11.152" height="10.168" viewBox="0 0 11 10" fill="none" stroke="#383a3e" stroke-width="2.3" stroke-linecap="round" stroke-linejoin="round"><path d="M1.3 5.2 L4.2 8 L9.8 1.6"/></svg>
<div class="abs" style="left:424.4px;top:947.8px;width:20.2px;height:13.2px;background:#f2f2f2;border-radius:2.2px;"></div>
<svg style="left:424.4px;top:947.8px" width="20.2" height="13.2" viewBox="0 0 20.2 13.2" fill="none" stroke="#2b2b2b" stroke-linejoin="miter"><path d="M3.6 9.8 V3.6 L6.4 7 L9.2 3.6 V9.8" stroke-width="1.9"/><path d="M14.6 3.4 V8.6" stroke-width="1.9"/><path d="M11.9 6.6 L14.6 9.8 L17.3 6.6 Z" fill="#2b2b2b" stroke="none"/></svg>
<div class="t" style="left:455.00px;top:946.32px;font-size:16.4px;color:#ececec;transform:scaleX(1.0112);transform-origin:0 0;">README.md</div>
<div class="abs" style="left:1713.7800000000002px;top:942.8px;width:107.22px;height:23.2px;background:#283547;border-radius:6px;"></div>
<div class="t" style="left:1720.98px;top:948.27px;font-size:14px;color:#55a4f3;letter-spacing:0.019px;font-family:'Liberation Mono',monospace;">~688 tokens</div>
<div class="abs" style="left:375px;top:981.4px;width:1467px;height:42.6px;background:#2b2b2b;border:1px solid #3a3a3a;border-radius:7px;"></div>
<div class="abs" style="left:393.7px;top:994.3000000000001px;width:16.4px;height:16.4px;background:#a5d1fb;border-radius:3px;"></div><svg style="left:396.488px;top:997.58px" width="11.152" height="10.168" viewBox="0 0 11 10" fill="none" stroke="#383a3e" stroke-width="2.3" stroke-linecap="round" stroke-linejoin="round"><path d="M1.3 5.2 L4.2 8 L9.8 1.6"/></svg>
<svg style="left:426.8px;top:992.3000000000001px" width="15.6" height="20.8" viewBox="0 0 15.6 20.8" ><path d="M1.6 0 H9.6 L15.6 6 V19.2 Q15.6 20.8 14 20.8 H1.6 Q0 20.8 0 19.2 V1.6 Q0 0 1.6 0 Z" fill="#f5c93a"/><path d="M9.3 0.2 V6.3 H15.4" fill="none" stroke="#2b2b2b" stroke-width="1.1"/><path d="M5 11.2 L2.8 13.7 L5 16.2 M10.6 11.2 L12.8 13.7 L10.6 16.2 M8.8 10.6 L6.8 16.8" fill="none" stroke="#3a2e0c" stroke-width="1.4" stroke-linecap="round" stroke-linejoin="round"/></svg>
<div class="t" style="left:455.00px;top:994.52px;font-size:16.4px;color:#ececec;transform:scaleX(1.0781);transform-origin:0 0;">package.json</div>
<div class="abs" style="left:1713.7800000000002px;top:991.0px;width:107.22px;height:23.2px;background:#283547;border-radius:6px;"></div>
<div class="t" style="left:1720.98px;top:996.47px;font-size:14px;color:#55a4f3;letter-spacing:0.019px;font-family:'Liberation Mono',monospace;">~296 tokens</div>
<div class="abs" style="left:375px;top:1029.6px;width:1467px;height:42.6px;background:#2b2b2b;border:1px solid #3a3a3a;border-radius:7px;"></div>
<div class="abs" style="left:393.7px;top:1042.5px;width:16.4px;height:16.4px;background:#a5d1fb;border-radius:3px;"></div><svg style="left:396.488px;top:1045.78px" width="11.152" height="10.168" viewBox="0 0 11 10" fill="none" stroke="#383a3e" stroke-width="2.3" stroke-linecap="round" stroke-linejoin="round"><path d="M1.3 5.2 L4.2 8 L9.8 1.6"/></svg>
<svg style="left:426.8px;top:1040.5px" width="15.6" height="20.8" viewBox="0 0 15.6 20.8" ><path d="M1.6 0 H9.6 L15.6 6 V19.2 Q15.6 20.8 14 20.8 H1.6 Q0 20.8 0 19.2 V1.6 Q0 0 1.6 0 Z" fill="#f5c93a"/><path d="M9.3 0.2 V6.3 H15.4" fill="none" stroke="#2b2b2b" stroke-width="1.1"/><path d="M5 11.2 L2.8 13.7 L5 16.2 M10.6 11.2 L12.8 13.7 L10.6 16.2 M8.8 10.6 L6.8 16.8" fill="none" stroke="#3a2e0c" stroke-width="1.4" stroke-linecap="round" stroke-linejoin="round"/></svg>
<div class="t" style="left:455.00px;top:1042.72px;font-size:16.4px;color:#ececec;letter-spacing:0.214px;transform:scaleX(1.0900);transform-origin:0 0;">tsconfig.json</div>
<div class="abs" style="left:1713.7800000000002px;top:1039.2px;width:107.22px;height:23.2px;background:#283547;border-radius:6px;"></div>
<div class="t" style="left:1720.98px;top:1044.67px;font-size:14px;color:#55a4f3;letter-spacing:0.019px;font-family:'Liberation Mono',monospace;">~164 tokens</div>
</div></div>
<div id="winborder"></div>
</body>
</html>
